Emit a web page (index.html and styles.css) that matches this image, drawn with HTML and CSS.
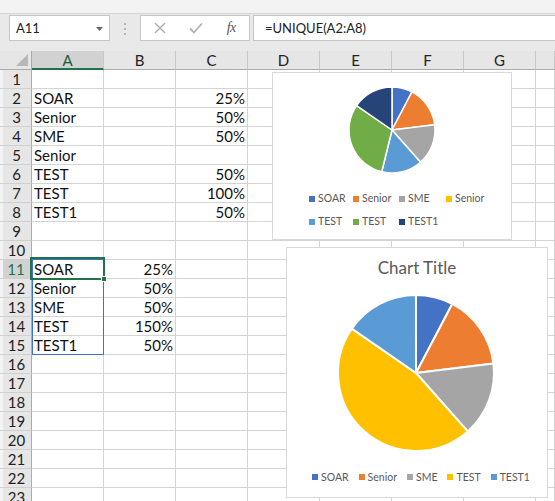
FILE: index.html
```html
<!DOCTYPE html>
<html>
<head>
<meta charset="utf-8">
<link rel="stylesheet" href="styles.css">
</head>
<body>
<div class="strip"></div>
<div class="fbar">
  <div class="namebox"><span>A11</span><svg class="dd" width="7" height="4" viewBox="0 0 7 4"><path d="M0 0 H7 L3.5 4 Z" fill="#6a6a6a"/></svg></div>
  <svg class="dots" width="3" height="12" viewBox="0 0 3 12"><rect x="0" y="0" width="2" height="2" fill="#b5b5b5"/><rect x="0" y="5" width="2" height="2" fill="#b5b5b5"/><rect x="0" y="10" width="2" height="2" fill="#b5b5b5"/></svg>
  <div class="fbtns">
    <div class="slot"><svg width="12" height="12" viewBox="0 0 12 12"><path d="M1 1 L11 11 M11 1 L1 11" stroke="#ababab" stroke-width="1.4" fill="none"/></svg></div>
    <div class="slot"><svg width="14" height="12" viewBox="0 0 14 12"><path d="M1 6.5 L5 10.5 L13 1.5" stroke="#b3b3b3" stroke-width="1.8" fill="none"/></svg></div>
    <div class="slot fx">fx</div>
  </div>
  <div class="finput">=UNIQUE(A2:A8)</div>
</div>
<div class="sheet">
  <div class="grid">
    <div class="corner"><svg width="12" height="12" viewBox="0 0 12 12"><path d="M12 0 V12 H0 Z" fill="#b8b8b8"/></svg></div>
    <div class="ch sel">A</div><div class="ch">B</div><div class="ch">C</div><div class="ch">D</div><div class="ch">E</div><div class="ch">F</div><div class="ch">G</div><div class="ch"></div>

    <div class="rh">1</div><div class="c"></div><div class="c"></div><div class="c"></div><div class="c"></div><div class="c"></div><div class="c"></div><div class="c"></div><div class="c"></div>
    <div class="rh">2</div><div class="c">SOAR</div><div class="c"></div><div class="c n">25%</div><div class="c"></div><div class="c"></div><div class="c"></div><div class="c"></div><div class="c"></div>
    <div class="rh">3</div><div class="c">Senior</div><div class="c"></div><div class="c n">50%</div><div class="c"></div><div class="c"></div><div class="c"></div><div class="c"></div><div class="c"></div>
    <div class="rh">4</div><div class="c">SME</div><div class="c"></div><div class="c n">50%</div><div class="c"></div><div class="c"></div><div class="c"></div><div class="c"></div><div class="c"></div>
    <div class="rh">5</div><div class="c">Senior</div><div class="c"></div><div class="c n"></div><div class="c"></div><div class="c"></div><div class="c"></div><div class="c"></div><div class="c"></div>
    <div class="rh">6</div><div class="c">TEST</div><div class="c"></div><div class="c n">50%</div><div class="c"></div><div class="c"></div><div class="c"></div><div class="c"></div><div class="c"></div>
    <div class="rh">7</div><div class="c">TEST</div><div class="c"></div><div class="c n">100%</div><div class="c"></div><div class="c"></div><div class="c"></div><div class="c"></div><div class="c"></div>
    <div class="rh">8</div><div class="c">TEST1</div><div class="c"></div><div class="c n">50%</div><div class="c"></div><div class="c"></div><div class="c"></div><div class="c"></div><div class="c"></div>
    <div class="rh">9</div><div class="c"></div><div class="c"></div><div class="c"></div><div class="c"></div><div class="c"></div><div class="c"></div><div class="c"></div><div class="c"></div>
    <div class="rh">10</div><div class="c"></div><div class="c"></div><div class="c"></div><div class="c"></div><div class="c"></div><div class="c"></div><div class="c"></div><div class="c"></div>
    <div class="rh rsel">11</div><div class="c">SOAR</div><div class="c n">25%</div><div class="c"></div><div class="c"></div><div class="c"></div><div class="c"></div><div class="c"></div><div class="c"></div>
    <div class="rh">12</div><div class="c">Senior</div><div class="c n">50%</div><div class="c"></div><div class="c"></div><div class="c"></div><div class="c"></div><div class="c"></div><div class="c"></div>
    <div class="rh">13</div><div class="c">SME</div><div class="c n">50%</div><div class="c"></div><div class="c"></div><div class="c"></div><div class="c"></div><div class="c"></div><div class="c"></div>
    <div class="rh">14</div><div class="c">TEST</div><div class="c n">150%</div><div class="c"></div><div class="c"></div><div class="c"></div><div class="c"></div><div class="c"></div><div class="c"></div>
    <div class="rh">15</div><div class="c">TEST1</div><div class="c n">50%</div><div class="c"></div><div class="c"></div><div class="c"></div><div class="c"></div><div class="c"></div><div class="c"></div>
    <div class="rh">16</div><div class="c"></div><div class="c"></div><div class="c"></div><div class="c"></div><div class="c"></div><div class="c"></div><div class="c"></div><div class="c"></div>
    <div class="rh">17</div><div class="c"></div><div class="c"></div><div class="c"></div><div class="c"></div><div class="c"></div><div class="c"></div><div class="c"></div><div class="c"></div>
    <div class="rh">18</div><div class="c"></div><div class="c"></div><div class="c"></div><div class="c"></div><div class="c"></div><div class="c"></div><div class="c"></div><div class="c"></div>
    <div class="rh">19</div><div class="c"></div><div class="c"></div><div class="c"></div><div class="c"></div><div class="c"></div><div class="c"></div><div class="c"></div><div class="c"></div>
    <div class="rh">20</div><div class="c"></div><div class="c"></div><div class="c"></div><div class="c"></div><div class="c"></div><div class="c"></div><div class="c"></div><div class="c"></div>
    <div class="rh">21</div><div class="c"></div><div class="c"></div><div class="c"></div><div class="c"></div><div class="c"></div><div class="c"></div><div class="c"></div><div class="c"></div>
    <div class="rh">22</div><div class="c"></div><div class="c"></div><div class="c"></div><div class="c"></div><div class="c"></div><div class="c"></div><div class="c"></div><div class="c"></div>
    <div class="rh">23</div><div class="c"></div><div class="c"></div><div class="c"></div><div class="c"></div><div class="c"></div><div class="c"></div><div class="c"></div><div class="c"></div>
  </div>
  <div class="spill"></div>
  <div class="active"></div>
  <div class="handle"></div>
</div>

<div class="chart chart1">
  <svg class="pie" width="238" height="110" viewBox="1 1 238 110">
    <g stroke="#fff" stroke-width="1.5" stroke-linejoin="round">
      <path d="M120 58 L120 15 A43 43 0 0 1 139.98 19.92 Z" fill="#4472C4"/>
      <path d="M120 58 L139.98 19.92 A43 43 0 0 1 162.69 52.82 Z" fill="#ED7D31"/>
      <path d="M120 58 L162.69 52.82 A43 43 0 0 1 148.51 90.19 Z" fill="#A5A5A5"/>
      <path d="M120 58 L148.51 90.19 A43 43 0 0 1 109.71 99.75 Z" fill="#5B9BD5"/>
      <path d="M120 58 L109.71 99.75 A43 43 0 0 1 84.61 33.57 Z" fill="#70AD47"/>
      <path d="M120 58 L84.61 33.57 A43 43 0 0 1 120 15 Z" fill="#264478"/>
    </g>
  </svg>
  <div class="legend1">
    <div class="li"><i class="sw" style="background:#4472C4"></i>SOAR</div>
    <div class="li"><i class="sw" style="background:#ED7D31"></i>Senior</div>
    <div class="li"><i class="sw" style="background:#A5A5A5"></i>SME</div>
    <div class="li"><i class="sw" style="background:#FFC000"></i>Senior</div>
    <div class="li"><i class="sw" style="background:#5B9BD5"></i>TEST</div>
    <div class="li"><i class="sw" style="background:#70AD47"></i>TEST</div>
    <div class="li"><i class="sw" style="background:#264478"></i>TEST1</div>
  </div>
</div>

<div class="chart chart2">
  <div class="title">Chart Title</div>
  <svg class="pie" width="260" height="178" viewBox="1 41 260 178">
    <g stroke="#fff" stroke-width="2" stroke-linejoin="round">
      <path d="M130 126 L130 48 A78 78 0 0 1 166.25 56.93 Z" fill="#4472C4"/>
      <path d="M130 126 L166.25 56.93 A78 78 0 0 1 207.43 116.6 Z" fill="#ED7D31"/>
      <path d="M130 126 L207.43 116.6 A78 78 0 0 1 181.72 184.38 Z" fill="#A5A5A5"/>
      <path d="M130 126 L181.72 184.38 A78 78 0 0 1 65.81 81.69 Z" fill="#FFC000"/>
      <path d="M130 126 L65.81 81.69 A78 78 0 0 1 130 48 Z" fill="#5B9BD5"/>
    </g>
  </svg>
  <div class="legend2">
    <div class="li"><i class="sw" style="background:#4472C4"></i>SOAR</div>
    <div class="li"><i class="sw" style="background:#ED7D31"></i>Senior</div>
    <div class="li"><i class="sw" style="background:#A5A5A5"></i>SME</div>
    <div class="li"><i class="sw" style="background:#FFC000"></i>TEST</div>
    <div class="li"><i class="sw" style="background:#5B9BD5"></i>TEST1</div>
  </div>
</div>
</body>
</html>
```
FILE: styles.css
```css
* { box-sizing: border-box; }
html, body { margin: 0; padding: 0; }
body {
  width: 555px;
  height: 501px;
  overflow: hidden;
  position: relative;
  background: #fff;
  font-family: Lato, "Noto Sans", sans-serif;
  color: #000;
}
.strip {
  height: 14px;
  background: #f3f3f3;
  border-bottom: 1px solid #d5d5d5;
}
.fbar {
  height: 37px;
  background: #e9e9e9;
  display: flex;
  align-items: flex-start;
  padding-top: 1px;
}
.namebox {
  margin-left: 9px;
  width: 101px;
  height: 26px;
  background: #fff;
  border: 1px solid #c6c6c6;
  display: flex;
  align-items: center;
  justify-content: space-between;
  padding: 0 6px 0 6px;
  font-size: 13px;
  color: #222;
}
.namebox .dd { margin-top: 1px; }
.dots { margin-left: 14px; margin-top: 8px; }
.fbtns {
  margin-left: 13px;
  width: 110px;
  height: 26px;
  background: #fff;
  border: 1px solid #c6c6c6;
  display: flex;
  padding-left: 1px;
}
.slot {
  width: 36px;
  display: flex;
  align-items: center;
  justify-content: center;
}
.fx {
  font-family: "Liberation Serif", serif;
  font-style: italic;
  font-size: 14px;
  color: #555;
  letter-spacing: -0.5px;
}
.finput {
  margin-left: 3px;
  flex: 1;
  height: 26px;
  background: #fff;
  border: 1px solid #c6c6c6;
  border-right: none;
  padding-left: 11px;
  font-size: 13px;
  line-height: 24px;
  color: #222;
}
.sheet { position: relative; }
.grid {
  display: grid;
  grid-template-columns: 32px repeat(7, 72px) 19px;
  grid-auto-rows: 19px;
  font-size: 15px;
}
.corner {
  background: #e6e6e6;
  border-right: 1px solid #ababab;
  border-bottom: 1px solid #ababab;
  display: flex;
  align-items: flex-end;
  justify-content: flex-end;
  padding: 0 3px 3px 0;
}
.ch {
  background: #e6e6e6;
  border-right: 1px solid #c8c8c8;
  border-bottom: 1px solid #ababab;
  text-align: center;
  line-height: 18px;
  color: #222;
}
.ch.sel {
  background: #d2d2d2;
  border-bottom: 2px solid #217346;
  color: #1d5c39;
}
.rh {
  background: linear-gradient(to right, #f3f3f3 3px, #e6e6e6 3px);
  border-right: 1px solid #ababab;
  border-bottom: 1px solid #d0d0d0;
  text-align: center;
  padding-left: 2px;
  line-height: 19px;
  color: #222;
}
.rh.rsel {
  background: linear-gradient(to right, #f3f3f3 3px, #d2d2d2 3px);
  color: #217346;
  border-right: 2px solid #217346;
}
.c {
  border-right: 1px solid #d4d4d4;
  border-bottom: 1px solid #d4d4d4;
  padding: 0 2px;
  line-height: 19px;
  white-space: nowrap;
  overflow: hidden;
  color: #111;
}
.c.n { text-align: right; }
.spill {
  position: absolute;
  left: 32px;
  top: 208px;
  width: 72px;
  height: 96px;
  border: 1px solid #3b73c9;
}
.active {
  position: absolute;
  left: 30px;
  top: 206px;
  width: 75px;
  height: 23px;
  border: 2px solid #217346;
}
.handle {
  position: absolute;
  left: 101px;
  top: 225px;
  width: 6px;
  height: 6px;
  background: #217346;
  border: 1px solid #fff;
}
.chart {
  position: absolute;
  background: #fff;
  border: 1px solid #d9d9d9;
  color: #595959;
}
.chart1 { left: 272px; top: 72px; width: 240px; height: 168px; }
.chart2 { left: 286px; top: 247px; width: 262px; height: 251px; }
.pie { display: block; }
.legend1 {
  margin-top: 4px;
  padding-left: 36px;
  display: grid;
  grid-template-columns: 44px 46px 47px auto;
  grid-auto-rows: 23px;
  font-size: 10.5px;
  line-height: 23px;
}
.li { display: flex; align-items: center; white-space: nowrap; }
.sw {
  display: inline-block;
  width: 6px;
  height: 6px;
  margin-right: 3px;
}
.title {
  height: 40px;
  line-height: 40px;
  text-align: center;
  font-size: 17px;
}
.legend2 {
  display: flex;
  gap: 10px;
  padding-left: 25px;
  font-size: 10.5px;
  line-height: 22px;
}
```
